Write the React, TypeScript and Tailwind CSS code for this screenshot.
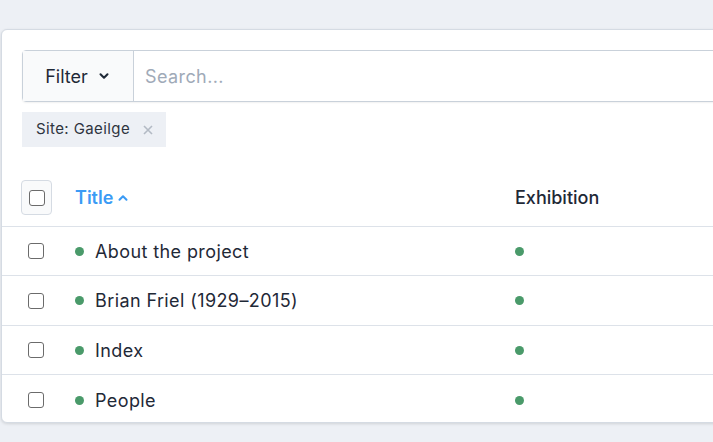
import React from 'react';

const rows = ['About the project', 'Brian Friel (1929–2015)', 'Index', 'People'];

const Checkbox = () => (
  <span className="block w-4 h-4 rounded-[3px] border-[1.5px] border-[#6b6b6b] bg-white" />
);

const Dot = () => <span className="block w-[9px] h-[9px] rounded-full bg-[#4a9a6a]" />;

const App = () => {
  return (
    <div
      className="w-[713px] h-[442px] overflow-hidden bg-[#edf0f5] pt-[29px] pl-px tracking-[0.4px]"
      style={{ fontFamily: 'Inter, "Noto Sans", sans-serif' }}
    >
      <div className="w-[760px] h-[394px] bg-white rounded-l-md border border-[#d5dbe3] shadow-[0_1px_3px_rgba(0,0,0,0.12)] pt-5">
        {/* filter + search */}
        <div className="ml-5 flex h-[52px] border border-[#c9d1da] rounded-l-[4px] shadow-[0_1px_2px_rgba(0,0,0,0.06)]">
          <button className="w-[111px] flex items-center justify-center gap-[9px] bg-[#f9fafb] border-r border-[#c9d1da] text-[18px] text-[#1f2937] tracking-normal">
            Filter
            <svg width="14" height="14" viewBox="0 0 24 24" fill="none" stroke="#1f2937" strokeWidth="3.5" strokeLinecap="round" strokeLinejoin="round">
              <path d="M6 9l6 6 6-6" />
            </svg>
          </button>
          <div className="flex-1 flex items-center pl-[11px] text-[18px] text-[#a0aab8]">Search...</div>
        </div>

        {/* active tag */}
        <div className="ml-5 mt-[10px] inline-flex items-center h-[35px] pl-[14px] pr-[13px] gap-[13px] bg-[#edf0f5] text-[15px] text-[#2d3440]">
          Site: Gaeilge
          <svg width="10" height="10" viewBox="0 0 10 10" stroke="#b3bac4" strokeWidth="1.6">
            <path d="M1 1l8 8M9 1l-8 8" />
          </svg>
        </div>

        {/* table */}
        <div className="mt-[33px]">
          <div className="flex items-start h-[47px] border-b border-[#dde2e9]">
            <div className="w-[73px] pl-[19px]">
              <div className="w-[31px] h-[35px] flex items-center justify-center border border-[#d5dbe3] rounded-[4px] bg-[#f9fafb]">
                <Checkbox />
              </div>
            </div>
            <div className="w-[440px] h-[35px] flex items-center gap-[3px] text-[18px] font-semibold text-[#3b9bf5] tracking-normal">
              Title
              <svg width="14" height="14" viewBox="0 0 24 24" fill="none" stroke="#3b9bf5" strokeWidth="3.5" strokeLinecap="round" strokeLinejoin="round">
                <path d="M6 15l6-6 6 6" />
              </svg>
            </div>
            <div className="h-[35px] flex items-center text-[18px] font-medium text-[#1f2937] tracking-normal">Exhibition</div>
          </div>
          {rows.map((r, i) => (
            <div
              key={r}
              className={`flex items-center ${i % 2 === 0 ? 'h-[49px]' : 'h-[50px]'} ${i < rows.length - 1 ? 'border-b border-[#dde2e9]' : ''}`}
            >
              <div className="w-[73px] pl-[26px]">
                <Checkbox />
              </div>
              <div className="w-[440px] flex items-center gap-[11px] text-[18px] text-[#1f2937]">
                <Dot />
                {r}
              </div>
              <div>
                <Dot />
              </div>
            </div>
          ))}
        </div>
      </div>
    </div>
  );
};

export default App;
